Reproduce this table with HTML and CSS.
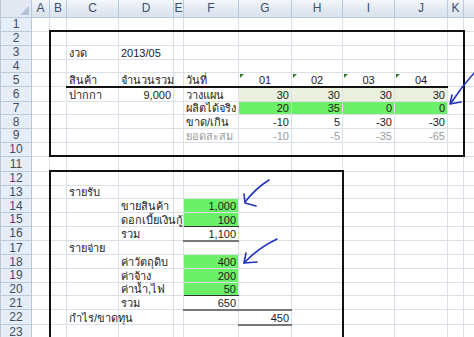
FILE: index.html
```html
<!DOCTYPE html>
<html>
<head>
<meta charset="utf-8">
<link rel="stylesheet" href="styles.css">
</head>
<body>
<div class="sheet">
<table class="grid">
<colgroup>
<col class="c-rh"><col class="c-a"><col class="c-b"><col class="c-c"><col class="c-d"><col class="c-e"><col class="c-f"><col class="c-g"><col class="c-h"><col class="c-i"><col class="c-j"><col class="c-k"><col class="c-l">
</colgroup>
<tr class="hdr"><th class="corner"><span class="tri"></span></th><th>A</th><th>B</th><th>C</th><th>D</th><th>E</th><th>F</th><th>G</th><th>H</th><th>I</th><th>J</th><th>K</th><th></th></tr>
<tr><th class="rh">1</th><td></td><td></td><td></td><td></td><td></td><td></td><td></td><td></td><td></td><td></td><td></td><td></td></tr>
<tr><th class="rh">2</th><td></td><td class="t l"></td><td class="t"></td><td class="t"></td><td class="t"></td><td class="t"></td><td class="t"></td><td class="t"></td><td class="t"></td><td class="t"></td><td class="t r"></td><td></td></tr>
<tr><th class="rh">3</th><td></td><td class="l"></td><td>งวด</td><td>2013/05</td><td></td><td></td><td></td><td></td><td></td><td></td><td class="r"></td><td></td></tr>
<tr><th class="rh">4</th><td></td><td class="l"></td><td></td><td></td><td></td><td></td><td></td><td></td><td></td><td></td><td class="r"></td><td></td></tr>
<tr><th class="rh">5</th><td></td><td class="l"></td><td class="u">สินค้า</td><td class="u">จำนวนรวม</td><td class="u"></td><td class="u">วันที่</td><td class="u ctr flag">01</td><td class="u ctr flag">02</td><td class="u ctr flag">03</td><td class="u ctr flag">04</td><td class="r"></td><td></td></tr>
<tr><th class="rh">6</th><td></td><td class="l"></td><td>ปากกา</td><td class="num">9,000</td><td></td><td>วางแผน</td><td class="num plan">30</td><td class="num plan">30</td><td class="num plan">30</td><td class="num plan">30</td><td class="r"></td><td></td></tr>
<tr><th class="rh">7</th><td></td><td class="l"></td><td></td><td></td><td></td><td>ผลิตได้จริง</td><td class="num grn">20</td><td class="num grn">35</td><td class="num grn">0</td><td class="num grn">0</td><td class="r"></td><td></td></tr>
<tr><th class="rh">8</th><td></td><td class="l"></td><td></td><td></td><td></td><td>ขาด/เกิน</td><td class="num">-10</td><td class="num">5</td><td class="num">-30</td><td class="num">-30</td><td class="r"></td><td></td></tr>
<tr><th class="rh">9</th><td></td><td class="l"></td><td></td><td></td><td></td><td class="dim">ยอดสะสม</td><td class="num dim">-10</td><td class="num dim">-5</td><td class="num dim">-35</td><td class="num dim">-65</td><td class="r"></td><td></td></tr>
<tr><th class="rh">10</th><td></td><td class="l b"></td><td class="b"></td><td class="b"></td><td class="b"></td><td class="b"></td><td class="b"></td><td class="b"></td><td class="b"></td><td class="b"></td><td class="b r"></td><td></td></tr>
<tr><th class="rh">11</th><td></td><td></td><td></td><td></td><td></td><td></td><td></td><td></td><td></td><td></td><td></td><td></td></tr>
<tr><th class="rh">12</th><td></td><td class="t l"></td><td class="t"></td><td class="t"></td><td class="t"></td><td class="t"></td><td class="t"></td><td class="t r"></td><td></td><td></td><td></td><td></td></tr>
<tr><th class="rh">13</th><td></td><td class="l"></td><td>รายรับ</td><td></td><td></td><td></td><td></td><td class="r"></td><td></td><td></td><td></td><td></td></tr>
<tr><th class="rh">14</th><td></td><td class="l"></td><td></td><td>ขายสินค้า</td><td></td><td class="num grn">1,000</td><td></td><td class="r"></td><td></td><td></td><td></td><td></td></tr>
<tr><th class="rh">15</th><td></td><td class="l"></td><td></td><td>ดอกเบี้ยเงินกู้</td><td></td><td class="num grn sub">100</td><td></td><td class="r"></td><td></td><td></td><td></td><td></td></tr>
<tr><th class="rh">16</th><td></td><td class="l"></td><td></td><td>รวม</td><td></td><td class="num tot">1,100</td><td></td><td class="r"></td><td></td><td></td><td></td><td></td></tr>
<tr><th class="rh">17</th><td></td><td class="l"></td><td>รายจ่าย</td><td></td><td></td><td></td><td></td><td class="r"></td><td></td><td></td><td></td><td></td></tr>
<tr><th class="rh">18</th><td></td><td class="l"></td><td></td><td>ค่าวัตถุดิบ</td><td></td><td class="num grn">400</td><td></td><td class="r"></td><td></td><td></td><td></td><td></td></tr>
<tr><th class="rh">19</th><td></td><td class="l"></td><td></td><td>ค่าจ้าง</td><td></td><td class="num grn">200</td><td></td><td class="r"></td><td></td><td></td><td></td><td></td></tr>
<tr><th class="rh">20</th><td></td><td class="l"></td><td></td><td>ค่าน้ำ,ไฟ</td><td></td><td class="num grn sub">50</td><td></td><td class="r"></td><td></td><td></td><td></td><td></td></tr>
<tr><th class="rh">21</th><td></td><td class="l"></td><td></td><td>รวม</td><td></td><td class="num tot">650</td><td class="tot"></td><td class="r"></td><td></td><td></td><td></td><td></td></tr>
<tr><th class="rh">22</th><td></td><td class="l"></td><td>กำไร/ขาดทุน</td><td></td><td></td><td></td><td class="num tot">450</td><td class="r"></td><td></td><td></td><td></td><td></td></tr>
<tr><th class="rh">23</th><td></td><td class="l b"></td><td class="b"></td><td class="b"></td><td class="b"></td><td class="b"></td><td class="b"></td><td class="b r"></td><td></td><td></td><td></td><td></td></tr>
<tr><th class="rh">24</th><td></td><td></td><td></td><td></td><td></td><td></td><td></td><td></td><td></td><td></td><td></td><td></td></tr>
</table>
<svg class="marks" width="474" height="337" viewBox="0 0 474 337">
<g fill="none" stroke="#2233bb" stroke-width="1.6" stroke-linecap="round" stroke-linejoin="round">
<path d="M476 71 Q462 86 451 103"/>
<path d="M452 95 L450 104 L461 102"/>
<path d="M269 180 Q256 188 245 202"/>
<path d="M244 194 L245 203 L256 206"/>
<path d="M277 239 Q258 248 244 263"/>
<path d="M246 253 L244 263 L257 262"/>
</g>
</svg>
</div>
</body>
</html>
```
FILE: styles.css
```css
html, body {
  margin: 0;
  padding: 0;
  background: #ffffff;
  overflow: hidden;
}
.sheet {
  position: relative;
  width: 474px;
  height: 337px;
  overflow: hidden;
}
.grid {
  border-collapse: collapse;
  table-layout: fixed;
  width: 523px;
  font-family: "Liberation Sans", "Noto Sans", sans-serif;
  font-size: 11px;
  color: #1c1c1c;
}
.c-rh { width: 31px; }
.c-a { width: 18px; }
.c-b { width: 17px; }
.c-c { width: 52px; }
.c-d { width: 55px; }
.c-e { width: 10px; }
.c-f { width: 55px; }
.c-g { width: 53px; }
.c-h { width: 51px; }
.c-i { width: 52px; }
.c-j { width: 53px; }
.c-k { width: 16px; }
.c-l { width: 60px; }
.grid tr { height: 13.7px; }
.grid tr.hdr { height: 17px; }
.grid td {
  border: 1px solid #dadfe8;
  padding: 0 2px;
  height: 12.7px;
  line-height: 12px;
  white-space: nowrap;
  overflow: visible;
  vertical-align: bottom;
  position: relative;
}
.hdr th {
  background: linear-gradient(#f4f7fb, #e1e8f2 60%, #d9e2ee);
  border: 1px solid #b9c9dc;
  border-top: none;
  font-weight: normal;
  font-size: 12px;
  color: #3d4e68;
  padding: 0;
  height: 16px;
}
.hdr th.corner {
  position: relative;
  background: #e3e9f3;
}
.tri {
  position: absolute;
  right: 2px;
  bottom: 2px;
  width: 0;
  height: 0;
  border-left: 9px solid transparent;
  border-bottom: 9px solid #b3c4da;
}
.rh {
  background: #e6edf7;
  border: 1px solid #b9c9dc;
  font-weight: normal;
  font-size: 12px;
  color: #3d4e68;
  padding: 0;
  text-align: center;
  line-height: 12px;
}
.t { border-top: 2px solid #111 !important; }
.b { border-bottom: 2px solid #111 !important; }
.l { border-left: 2px solid #111 !important; }
.r { border-right: 2px solid #111 !important; }
.u { border-bottom: 2px solid #111 !important; }
.num { text-align: right; }
.ctr { text-align: center; }
.plan { background: #ebf1de; }
.grn { background: #6cef69; }
.dim { color: #9c9c9c; }
.sub { border-bottom: 1px solid #333 !important; }
.tot { border-bottom: 2px solid #777 !important; }
.flag::before {
  content: "";
  position: absolute;
  left: 1px;
  top: 1px;
  border-top: 4px solid #2f7d2f;
  border-right: 4px solid transparent;
}
.marks {
  position: absolute;
  left: 0;
  top: 0;
  pointer-events: none;
}
```
